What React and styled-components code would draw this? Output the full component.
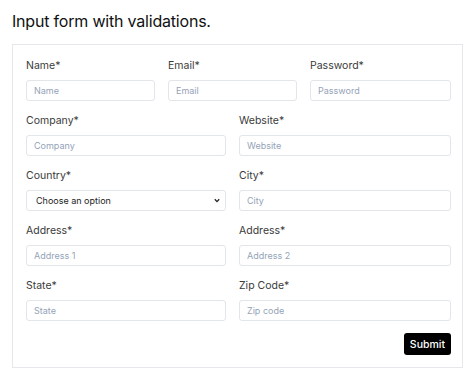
import React from "react";
import styled, { createGlobalStyle } from "styled-components";

const GlobalStyle = createGlobalStyle`
  body {
    margin: 0;
    background: #fff;
    font-family: Inter, "Noto Sans", sans-serif;
  }
  * { box-sizing: border-box; }
`;

const Page = styled.div`
  padding: 11px 11px 0 12px;
`;

const Title = styled.h1`
  margin: 0 0 13px;
  font-size: 16px;
  line-height: 20px;
  font-weight: 400;
  letter-spacing: -0.2px;
  color: #111;
`;

const Card = styled.form`
  width: 451px;
  border: 1px solid #e5e7eb;
  padding: 13px 11px 12px 13px;
  display: flex;
  flex-direction: column;
  gap: 12px;
`;

const Row = styled.div`
  display: grid;
  grid-template-columns: ${(p) => p.$cols};
  gap: 13px;
`;

const Field = styled.div`
  display: flex;
  flex-direction: column;
  gap: 6px;
`;

const Label = styled.label`
  font-size: 10.5px;
  line-height: 16px;
  color: #3a3a3a;
`;

const Input = styled.input`
  display: block;
  height: 21px;
  width: 100%;
  border: 1px solid #e2e5ea;
  border-radius: 3px;
  padding: 0 7px;
  font-family: inherit;
  font-size: 9px;
  color: #333;
  outline: none;
  &::placeholder {
    color: #94a3b8;
  }
`;

const SelectWrap = styled.div`
  position: relative;
  svg {
    position: absolute;
    right: 6px;
    top: 8px;
    pointer-events: none;
  }
`;

const Select = styled.select`
  display: block;
  appearance: none;
  height: 21px;
  width: 100%;
  border: 1px solid #e2e5ea;
  border-radius: 3px;
  padding: 0 16px 0 9px;
  font-family: inherit;
  font-size: 9px;
  color: #222;
  background: #fff;
`;

const Footer = styled.div`
  display: flex;
  justify-content: flex-end;
`;

const Button = styled.button`
  height: 22px;
  padding: 0 6px;
  border: none;
  border-radius: 3px;
  background: #000;
  color: #fff;
  font-family: inherit;
  font-size: 10.5px;
  font-weight: 500;
`;

function TextField({ label, placeholder, type = "text" }) {
  return (
    <Field>
      <Label>{label}*</Label>
      <Input type={type} placeholder={placeholder} />
    </Field>
  );
}

export default function App() {
  return (
    <Page>
      <GlobalStyle />
      <Title>Input form with validations.</Title>
      <Card onSubmit={(e) => e.preventDefault()}>
        <Row $cols="129px 129px 1fr">
          <TextField label="Name" placeholder="Name" />
          <TextField label="Email" placeholder="Email" type="email" />
          <TextField label="Password" placeholder="Password" type="password" />
        </Row>
        <Row $cols="200px 1fr">
          <TextField label="Company" placeholder="Company" />
          <TextField label="Website" placeholder="Website" />
        </Row>
        <Row $cols="200px 1fr">
          <Field>
            <Label>Country*</Label>
            <SelectWrap>
              <Select defaultValue="">
                <option value="">Choose an option</option>
                <option value="us">United States</option>
                <option value="in">India</option>
              </Select>
              <svg width="6" height="5" viewBox="0 0 6 5">
                <path d="M0.8 1.2 L3 3.6 L5.2 1.2" fill="none" stroke="#222" strokeWidth="1.3" />
              </svg>
            </SelectWrap>
          </Field>
          <TextField label="City" placeholder="City" />
        </Row>
        <Row $cols="200px 1fr">
          <TextField label="Address" placeholder="Address 1" />
          <TextField label="Address" placeholder="Address 2" />
        </Row>
        <Row $cols="200px 1fr">
          <TextField label="State" placeholder="State" />
          <TextField label="Zip Code" placeholder="Zip code" />
        </Row>
        <Footer>
          <Button type="submit">Submit</Button>
        </Footer>
      </Card>
    </Page>
  );
}
